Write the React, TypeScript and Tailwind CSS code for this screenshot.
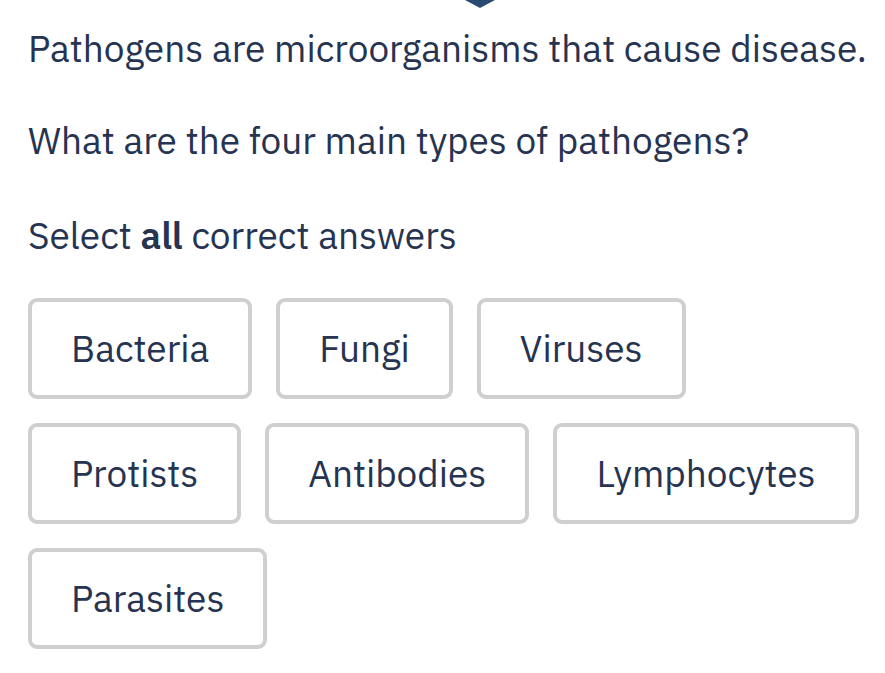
import React from "react";

const rows: string[][] = [
  ["Bacteria", "Fungi", "Viruses"],
  ["Protists", "Antibodies", "Lymphocytes"],
  ["Parasites"],
];

export default function App() {
  return (
    <div
      className="relative w-[885px] h-[673px] overflow-hidden bg-white text-[#263451]"
      style={{ fontFamily: '"IBM Plex Sans", "Noto Sans", "Open Sans", sans-serif' }}
    >
      <div className="absolute left-[465px] top-0 w-0 h-0 border-l-[15px] border-r-[15px] border-t-[8px] border-l-transparent border-r-transparent border-t-[#2b4a72]" />
      <div className="pl-[28px] pt-[24px] flex flex-col">
        <div className="h-[48px] leading-[48px] text-[37px] whitespace-nowrap">
          Pathogens are microorganisms that cause disease.
        </div>
        <div className="mt-[44px] h-[48px] leading-[48px] text-[37px] whitespace-nowrap">
          What are the four main types of pathogens?
        </div>
        <div className="mt-[47px] h-[48px] leading-[48px] text-[37px] whitespace-nowrap">
          Select <span className="font-semibold">all</span> correct answers
        </div>
        <div className="mt-[39px] flex flex-col gap-[24px]">
          {rows.map((r, i) => (
            <div key={i} className="flex gap-[24px]">
              {r.map((t) => (
                <div
                  key={t}
                  className="h-[101px] px-[39px] flex items-center border-4 border-[#cfcfcf] rounded-[9px] bg-white text-[37px] whitespace-nowrap"
                >
                  {t}
                </div>
              ))}
            </div>
          ))}
        </div>
      </div>
    </div>
  );
}
